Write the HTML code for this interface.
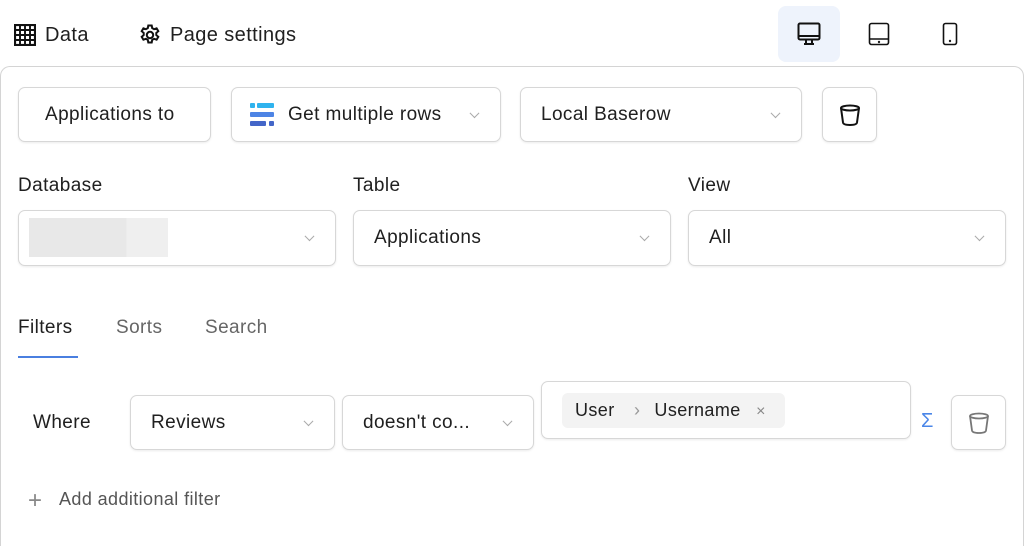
<!DOCTYPE html>
<html><head><style>
*{box-sizing:border-box;margin:0;padding:0}
body{width:1024px;height:527px;overflow:hidden;background:#fff;font-family:"Liberation Sans",sans-serif;color:#202020;position:relative;letter-spacing:.4px}
.a{position:absolute}
.box{position:absolute;border:1px solid #d7d7d7;border-radius:7px;background:#fff;box-shadow:0 1px 2px rgba(0,0,0,.08);font-size:19px;display:flex;align-items:center}
.chev{position:absolute;right:22px;top:50%;width:7px;height:7px;border-right:1.2px solid #aaa;border-bottom:1.2px solid #aaa;transform:translateY(-75%) rotate(45deg)}
.lbl{position:absolute;font-size:19px}
</style></head><body>
<!-- top bar -->
<svg class="a" style="left:14px;top:24px" width="22" height="22" viewBox="0 0 22 22"><rect x="1" y="1" width="20" height="20" fill="none" stroke="#111" stroke-width="2.2"/><path d="M6 1v20M11 1v20M16 1v20M1 6h20M1 11h20M1 16h20" stroke="#111" stroke-width="1.9"/></svg>
<div class="lbl" style="left:45px;top:24px;font-size:20px">Data</div>
<svg class="a" style="left:138px;top:23px" width="24" height="24" viewBox="0 0 24 24" fill="none" stroke="#111" stroke-width="2"><circle cx="12" cy="12" r="3.2"/><path d="M10.3 2.5h3.4l.5 2.6 1.9 1.1 2.5-.9 1.7 2.9-2 1.7v2.2l2 1.7-1.7 2.9-2.5-.9-1.9 1.1-.5 2.6h-3.4l-.5-2.6-1.9-1.1-2.5.9-1.7-2.9 2-1.7v-2.2l-2-1.7 1.7-2.9 2.5.9 1.9-1.1z"/></svg>
<div class="lbl" style="left:170px;top:24px;font-size:20px">Page settings</div>
<div class="a" style="left:778px;top:6px;width:62px;height:56px;background:#eef3fc;border-radius:8px"></div>
<svg class="a" style="left:797px;top:22px" width="24" height="24" viewBox="0 0 24 24" fill="none" stroke="#111" stroke-width="2"><rect x="1.5" y="1.5" width="21" height="16" rx="1.5"/><path d="M1.5 14h21" /><path d="M9 18v3M15 18v3M7 22h10"/></svg>
<svg class="a" style="left:868px;top:22px" width="22" height="24" viewBox="0 0 22 24" fill="none" stroke="#111" stroke-width="1.6"><rect x="1.5" y="1.5" width="19" height="21" rx="2"/><path d="M1.5 17h19"/><circle cx="11" cy="20" r=".4" fill="#111"/></svg>
<svg class="a" style="left:942px;top:22px" width="16" height="24" viewBox="0 0 16 24" fill="none" stroke="#111" stroke-width="1.6"><rect x="1.5" y="1.5" width="13" height="21" rx="2"/><circle cx="8" cy="19" r=".4" fill="#111"/></svg>
<!-- panel -->
<div class="a" style="left:0;top:66px;width:1024px;height:480px;border:1px solid #d4d4d4;border-radius:10px 10px 0 0;border-bottom:none"></div>
<div class="box" style="left:18px;top:87px;width:193px;height:55px;padding-left:26px;overflow:hidden;white-space:nowrap">Applications to</div>
<div class="box" style="left:231px;top:87px;width:270px;height:55px;padding-left:56px">Get multiple rows<span class="chev"></span>
<svg class="a" style="left:18px;top:15px" width="25" height="24" viewBox="0 0 25 24"><rect x="0" y="0" width="5" height="5" rx="1" fill="#2fb3ee"/><rect x="7" y="0" width="17" height="5" rx="1" fill="#2fb3ee"/><rect x="0" y="9" width="24" height="5" rx="1" fill="#4d84e5"/><rect x="0" y="18" width="16" height="5" rx="1" fill="#4466c8"/><rect x="19" y="18" width="5" height="5" rx="1" fill="#4466c8"/></svg></div>
<div class="box" style="left:520px;top:87px;width:282px;height:55px;padding-left:20px">Local Baserow<span class="chev"></span></div>
<div class="box" style="left:822px;top:87px;width:55px;height:55px;justify-content:center"><svg width="22" height="22" viewBox="0 0 22 22" fill="none" stroke="#111" stroke-width="2"><ellipse cx="11" cy="4" rx="9" ry="2.5"/><path d="M2 4l2 14.5c.3 1.8 3.3 2.5 7 2.5s6.7-.7 7-2.5L20 4"/></svg></div>
<div class="lbl" style="left:18px;top:175px">Database</div>
<div class="lbl" style="left:353px;top:175px">Table</div>
<div class="lbl" style="left:688px;top:175px">View</div>
<div class="box" style="left:18px;top:210px;width:318px;height:56px"><div class="a" style="left:10px;top:7px;width:139px;height:39px;background:linear-gradient(90deg,#e8e8e8 0 70%,#efefef 70%)"></div><span class="chev"></span></div>
<div class="box" style="left:353px;top:210px;width:318px;height:56px;padding-left:20px">Applications<span class="chev"></span></div>
<div class="box" style="left:688px;top:210px;width:318px;height:56px;padding-left:20px">All<span class="chev"></span></div>
<div class="lbl" style="left:18px;top:317px">Filters</div>
<div class="lbl" style="left:116px;top:317px;color:#666">Sorts</div>
<div class="lbl" style="left:205px;top:317px;color:#666">Search</div>
<div class="a" style="left:18px;top:356px;width:60px;height:2px;background:#4a7fe0"></div>
<div class="lbl" style="left:33px;top:412px">Where</div>
<div class="box" style="left:130px;top:395px;width:205px;height:55px;padding-left:20px">Reviews<span class="chev"></span></div>
<div class="box" style="left:342px;top:395px;width:192px;height:55px;padding-left:20px">doesn't co...<span class="chev"></span></div>
<div class="box" style="left:541px;top:381px;width:370px;height:58px"><div class="a" style="left:20px;top:11px;width:223px;height:35px;background:#f3f3f3;border-radius:6px;font-size:18px;line-height:35px;padding-left:13px">User <span style="color:#999;margin:0 14px 0 14px">›</span>Username <span style="color:#888;margin-left:10px;font-size:16px">×</span></div></div>
<div class="a" style="left:921px;top:410px;font-size:20px;color:#4a86e8">Σ</div>
<div class="box" style="left:951px;top:395px;width:55px;height:55px;justify-content:center"><svg width="22" height="22" viewBox="0 0 22 22" fill="none" stroke="#777" stroke-width="1.8"><ellipse cx="11" cy="4" rx="9" ry="2.5"/><path d="M2 4l2 14.5c.3 1.8 3.3 2.5 7 2.5s6.7-.7 7-2.5L20 4"/></svg></div>
<div class="a" style="left:28px;top:487px;font-size:24px;color:#888;font-weight:300">+</div>
<div class="lbl" style="left:59px;top:489px;font-size:18px;color:#555">Add additional filter</div>
</body></html>
